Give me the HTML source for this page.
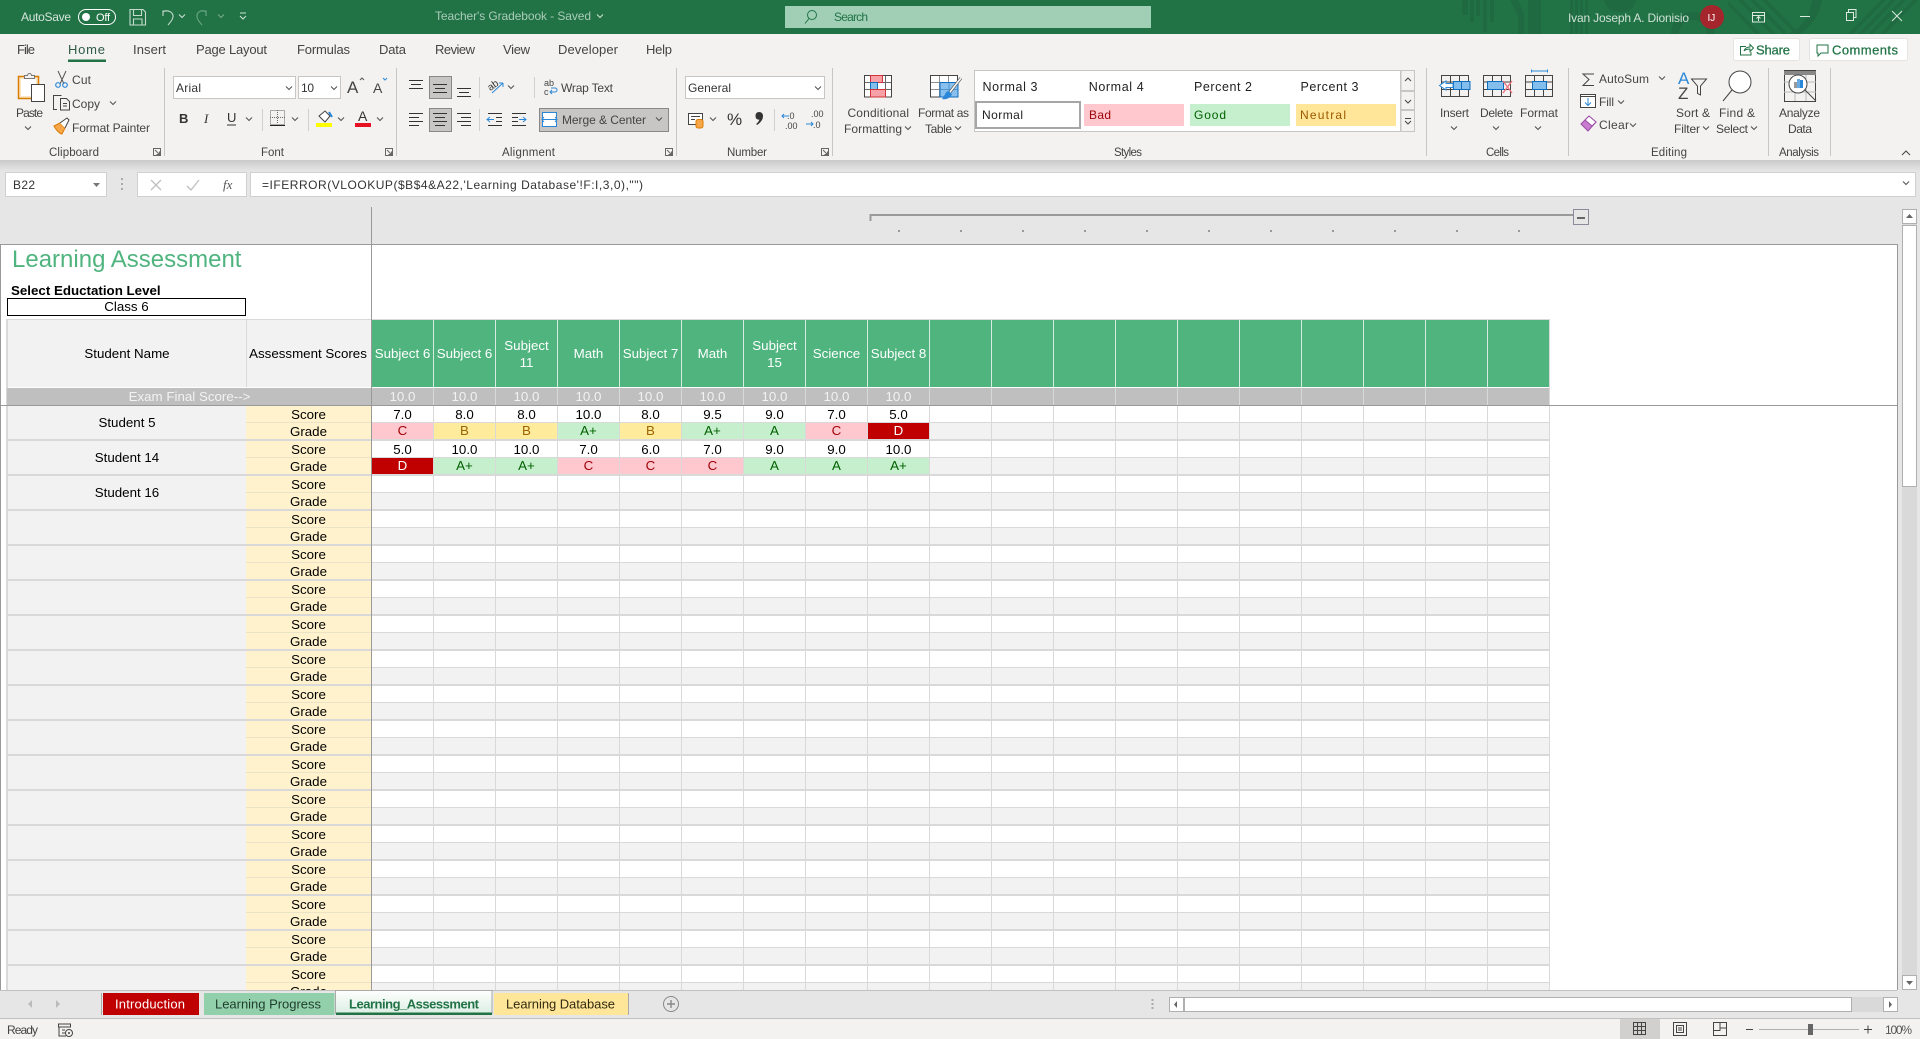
<!DOCTYPE html>
<html><head><meta charset="utf-8"><title>Teacher's Gradebook</title>
<style>
html,body{margin:0;padding:0;width:1920px;height:1039px;overflow:hidden;background:#e6e6e6;font-family:"Liberation Sans",Arial,sans-serif}
svg{position:absolute;left:0;top:0}
svg text{font-family:"Liberation Sans",Arial,sans-serif;font-size:12px;fill:#444}
#s{position:absolute;left:0;top:0;width:1898px;height:990px;overflow:hidden;font-size:13.33px;color:#000}
#s div{position:absolute;box-sizing:border-box;text-align:center}
.l{background:#999}
.c0{left:372px}.c1{left:434px}.c2{left:496px}.c3{left:558px}.c4{left:620px}.c5{left:682px}.c6{left:744px}.c7{left:806px}.c8{left:868px}
#s .h,#s .e,#s .v,#s .g{width:61px}
#s .h{top:320px;height:67px;color:#fff;display:flex;align-items:center;justify-content:center;line-height:17px}
#s .e{top:388px;height:17px;line-height:17px;color:#f2f2f2}
#s .v{top:0;height:16px;line-height:17px}
#s .g{top:17px;height:16px;line-height:16px}
.R{background:#ffc7ce;color:#9c0006}.G{background:#c6efce;color:#006100}.Y{background:#ffeb9c;color:#9c6500}.D{background:#c00000;color:#fff}
#s .n{left:8px;width:238px;height:33px;line-height:33px}
#bc{left:246px;top:406px;width:125px;height:600px;background:#fff2cc}
#bc i{display:block;box-sizing:border-box;font-style:normal;text-align:center}
#bc i.a{border-bottom:1px solid #ebe3c8;height:17px;line-height:17px}
#bc i.b{border-bottom:2px solid #d9d9d9;height:18px;line-height:18px}
</style></head>
<body>
<svg width="1920" height="1039" viewBox="0 0 1920 1039">
<defs>
<path id="c" d="M-3-1.5L0 1.5 3-1.5" fill="none" stroke="#555" stroke-width="1.1"/>
<path id="w" d="M-3-1.5L0 1.5 3-1.5" fill="none" stroke="#cfe1d6" stroke-width="1"/>
<linearGradient id="sh" x1="0" y1="0" x2="0" y2="1"><stop offset="0" stop-color="#c9c9c9"/><stop offset="1" stop-color="#e6e6e6"/></linearGradient>
<linearGradient id="at" x1="0" y1="0" x2="0" y2="1"><stop offset="0" stop-color="#fff"/><stop offset="1" stop-color="#dcefe4"/></linearGradient>
</defs>
<!-- title bar -->
<rect width="1920" height="34" fill="#217346"/>
<g fill="#1f6a41">
<rect x="1462" y="0" width="6" height="15"/><rect x="1470" y="0" width="4" height="22"/><rect x="1476" y="0" width="4" height="16"/><rect x="1483" y="0" width="4" height="32"/><rect x="1490" y="0" width="4" height="22"/>
<path d="M1510 0h8l6 14v20h-6V16z"/><rect x="1528" y="0" width="13" height="34"/>
<rect x="1570" y="0" width="3" height="34"/><rect x="1575" y="0" width="3" height="34"/><rect x="1580" y="0" width="3" height="34"/><rect x="1585" y="0" width="3" height="34"/>
<path d="M1604 0h32c-2 10-8 12-16 12s-14-3-16-12z"/>
<path d="M1718 34a22 22 0 0 0-44 0h8a14 14 0 0 1 28 0z" transform="translate(-3 0)"/>
<path d="M1728 5l28 29h5l-33-33zM1738 0l33 34h5l-33-34zM1750 0l33 34h5l-33-34zM1762 0l33 34h5l-33-34z"/>
<path d="M1822 0c-2 14-10 26-22 34h-12c14-6 22-20 24-34z"/>
<path d="M1848 34l33-34h5l-33 34zM1858 34l33-34h5l-33 34zM1868 34l33-34h5l-33 34zM1880 34l33-34h5l-33 34z"/>
</g>
<text x="21" y="21" textLength="50" style="fill:#d5e5db">AutoSave</text>
<rect x="78.500" y="9.500" width="37" height="15" rx="7.500" fill="none" stroke="#fff"/>
<circle cx="86" cy="17" r="4" fill="#fff"/>
<text x="96" y="21" textLength="14" style="fill:#fff;font-size:11px">Off</text>
<g fill="none" stroke="#c6dace" stroke-width="1.1">
<path d="M130 9.500h13l2.500 2.500v13h-15.500zM133.500 9.500v6h8v-6M133.500 25v-6h8.500v6"/>
<path d="M168 11h-5v5M163.500 11.500c5-2 10 1 9.500 5.500-.4 3-2.500 5-5 8"/>
<use href="#w" x="182" y="16"/>
</g>
<g fill="none" stroke="#6ea888" stroke-width="1.1">
<path d="M201 11h5v5M205.500 11.500c-5-2-9 1-8.500 5.500.4 3 2.500 5 5 8"/>
<use href="#w" x="221" y="16" opacity=".5"/>
</g>
<path d="M240 13h6M240 16l3 3 3-3" fill="none" stroke="#cfe1d6"/>
<text x="435" y="20" textLength="156" style="fill:#a9cbb8">Teacher's Gradebook  -  Saved</text>
<use href="#w" x="600" y="16"/>
<rect x="785" y="6" width="366" height="22" fill="#a0cfb5"/>
<circle cx="812" cy="15" r="4.500" fill="none" stroke="#217346"/><path d="M809 18.500l-4 5" stroke="#217346" fill="none"/>
<text x="834" y="21" textLength="34" style="fill:#217346">Search</text>
<text x="1568" y="22" textLength="121" style="fill:#cfe1d6">Ivan Joseph A. Dionisio</text>
<circle cx="1712" cy="17" r="12" fill="#a4262c"/>
<text x="1707.500" y="21" style="fill:#fff;font-size:10px">IJ</text>
<g fill="none" stroke="#dbe9e0">
<path d="M1752.500 12.500h12v9.500h-12zM1752.500 15.500h12M1758.500 21v-4M1756.500 18.500l2-2 2 2"/>
<path d="M1800 16.500h10"/>
<path d="M1846.500 12.500h7v8h-7zM1848.500 12v-2.500h7.500v8h-2.500"/>
<path d="M1892 11l10 10M1902 11l-10 10"/>
</g>
<!-- ribbon -->
<rect y="34" width="1920" height="126" fill="#f3f2f1"/>
<rect y="160" width="1920" height="11" fill="url(#sh)"/>
<text x="17" y="54" textLength="18" style="font-size:13px">File</text>
<text x="68" y="54" textLength="37" style="font-size:13px;fill:#2f5a43">Home</text>
<text x="133" y="54" textLength="33" style="font-size:13px">Insert</text>
<text x="196" y="54" textLength="71" style="font-size:13px">Page Layout</text>
<text x="297" y="54" textLength="53" style="font-size:13px">Formulas</text>
<text x="379" y="54" textLength="27" style="font-size:13px">Data</text>
<text x="435" y="54" textLength="40" style="font-size:13px">Review</text>
<text x="503" y="54" textLength="27" style="font-size:13px">View</text>
<text x="558" y="54" textLength="60" style="font-size:13px">Developer</text>
<text x="646" y="54" textLength="26" style="font-size:13px">Help</text>
<rect x="68" y="59.500" width="38" height="2.500" fill="#217346"/>
<!-- share/comments -->
<rect x="1733.500" y="38.500" width="66" height="22" rx="2" fill="#fff" stroke="#e6e4e2"/>
<rect x="1809.500" y="38.500" width="98" height="22" rx="2" fill="#fff" stroke="#e6e4e2"/>
<path d="M1746 46.500h-5.500v8.500h10.500v-3M1744 51c.8-2.500 3-4 6-4v-2.500l3.500 3.500-3.500 3.500v-2.500c-2.500 0-4.500.5-6 2" fill="none" stroke="#217346"/>
<text x="1756" y="54.500" textLength="34" style="fill:#217346;font-size:13px;stroke:#217346;stroke-width:.25">Share</text>
<path d="M1817 45h11v8h-7l-3 3v-3h-1z" fill="none" stroke="#217346"/>
<text x="1832" y="54.500" textLength="66" style="fill:#217346;font-size:13px;stroke:#217346;stroke-width:.25">Comments</text>
<!-- separators -->
<g stroke="#c8c6c4">
<path d="M164.500 68v88M396.500 68v88M676.500 68v88M832.500 68v88M1426.500 68v88M1568.500 68v88M1768.500 68v88M1830.500 68v88"/>
<path d="M262.500 109v22M308.500 109v22M479.500 77v21M479.500 109v22M534.500 77v21M774.500 109v22" stroke="#d2d0ce"/>
</g>
<!-- group labels -->
<text x="49" y="156" textLength="50" style="font-size:11.500px">Clipboard</text>
<text x="261" y="156" textLength="23" style="font-size:11.500px">Font</text>
<text x="502" y="156" textLength="53" style="font-size:11.500px">Alignment</text>
<text x="727" y="156" textLength="40" style="font-size:11.500px">Number</text>
<text x="1114" y="156" textLength="28" style="font-size:11.500px">Styles</text>
<text x="1486" y="156" textLength="23" style="font-size:11.500px">Cells</text>
<text x="1651" y="156" textLength="36" style="font-size:11.500px">Editing</text>
<text x="1779" y="156" textLength="40" style="font-size:11.500px">Analysis</text>
<g fill="none" stroke="#666"><path d="M153.500 148.500h7v7h-7zM155 150l4 4M159.500 151.500v3h-3M385.500 148.500h7v7h-7zM387 150l4 4M391.500 151.500v3h-3M665.500 148.500h7v7h-7zM667 150l4 4M671.500 151.500v3h-3M821.500 148.500h7v7h-7zM823 150l4 4M827.500 151.500v3h-3"/></g>
<!-- clipboard -->
<rect x="18.500" y="76.500" width="20" height="22" fill="#fce7c4" stroke="#d97c00" stroke-width="1.500"/>
<rect x="21" y="79" width="15" height="17" fill="#fff"/>
<path d="M24.500 78.500v-3h3a2 2 0 0 1 4 0h3v3z" fill="#f3f2f1" stroke="#777"/>
<rect x="31.500" y="84.500" width="13" height="17" fill="#fff" stroke="#444"/>
<text x="16" y="117" textLength="27">Paste</text><use href="#c" x="28" y="128"/>
<path d="M58 71l6 13M66 71l-6 13" fill="none" stroke="#555"/>
<circle cx="58" cy="85" r="2.300" fill="none" stroke="#2b88d8" stroke-width="1.200"/><circle cx="65" cy="85" r="2.300" fill="none" stroke="#2b88d8" stroke-width="1.200"/>
<text x="72" y="84" textLength="19">Cut</text>
<path d="M57 109.500h-3.500v-14h8M60.500 98.500h6l3 3v8.500h-9zM63 103.500h4M63 106h4" fill="none" stroke="#444"/>
<text x="72" y="108" textLength="28">Copy</text><use href="#c" x="113" y="103"/>
<path d="M54 126l6-3 5 5-3 6c-2 0-6-4-8-8z" fill="#f7a64a" stroke="#d97c00"/><path d="M60 123l7-5 2 2-4 8" fill="#fff" stroke="#444"/>
<text x="72" y="132" textLength="78">Format Painter</text>
<!-- font -->
<rect x="173.500" y="76.500" width="122" height="22" fill="#fff" stroke="#c8c6c4"/>
<rect x="298.500" y="76.500" width="42" height="22" fill="#fff" stroke="#c8c6c4"/>
<text x="176" y="92" textLength="25" style="fill:#333">Arial</text><use href="#c" x="289" y="88"/>
<text x="301" y="92" textLength="13" style="fill:#333">10</text><use href="#c" x="334" y="88"/>
<text x="347" y="93" style="font-size:17px">A</text><path d="M360 80l2-2 2 2" fill="none" stroke="#555"/>
<text x="373" y="93" style="font-size:14px">A</text><path d="M383 78l2 2 2-2" fill="none" stroke="#2b88d8"/>
<text x="179" y="123" style="font-size:13px;font-weight:bold;fill:#333">B</text>
<text x="204" y="123" style="font-size:13px;font-style:italic;font-family:'Liberation Serif',serif;fill:#333">I</text>
<text x="227" y="122" style="font-size:13px;fill:#333">U</text><path d="M227 125h9" stroke="#333"/>
<use href="#c" x="249" y="119"/>
<path d="M270.500 110.500h14v14h-14z" fill="none" stroke="#666" stroke-dasharray="1 1"/><path d="M277.500 110v14M270 117.500h15" stroke="#666" stroke-dasharray="1 1"/><path d="M270 125.500h15" stroke="#222"/>
<use href="#c" x="295" y="119"/>
<path d="M319 116l6-5 5 5-5 6z" fill="#fff" stroke="#444"/><path d="M329 112l3 5" stroke="#2b88d8" stroke-width="2"/><rect x="316" y="123" width="16" height="4" fill="#ff0"/>
<use href="#c" x="341" y="119"/>
<text x="358" y="121" style="font-size:14px;fill:#333">A</text><rect x="355" y="123" width="16" height="4" fill="#e81123"/>
<use href="#c" x="380" y="119"/>
<!-- alignment -->
<rect x="429.500" y="76.500" width="22" height="22" fill="#c8c6c4" stroke="#8a8886"/>
<rect x="429.500" y="108.500" width="22" height="23" fill="#c8c6c4" stroke="#8a8886"/>
<g stroke="#333" fill="none">
<path d="M409 80.500h14M411 84.500h10M409 88.500h14"/>
<path d="M433 84.500h14M435 88.500h10M433 92.500h14"/>
<path d="M457 88.500h14M459 92.500h10M457 96.500h14" />
<path d="M409 113.500h14M409 117.500h10M409 121.500h14M409 125.500h10"/>
<path d="M433 113.500h14M435 117.500h10M433 121.500h14M435 125.500h10"/>
<path d="M457 113.500h14M461 117.500h10M457 121.500h14M461 125.500h10"/>
<path d="M488 113.500h14M488 125.500h14M496 117.500h6M496 121.500h6M512 113.500h14M512 125.500h14M512 117.500h6M512 121.500h6"/>
</g>
<path d="M487 119.500h7M490 117l-3 2.500 3 2.500M519 119.500h7M523 117l3 2.500-3 2.500" fill="none" stroke="#2b88d8"/>
<text x="488" y="88" style="font-size:10px;fill:#333" transform="rotate(-35 494 86)">ab</text>
<path d="M492 93l11-10M503 83h-4M503 83v4" fill="none" stroke="#2b88d8"/><use href="#c" x="511" y="87"/>
<text x="544" y="86" style="font-size:9px">ab</text><text x="544" y="95" style="font-size:9px">c</text>
<path d="M551 92h4a2 2 0 0 0 0-4h-4M552 90l-2 2 2 2" fill="none" stroke="#2b88d8"/>
<text x="561" y="92" textLength="52">Wrap Text</text>
<rect x="539.500" y="108.500" width="129" height="23" fill="#c8c6c4" stroke="#8a8886"/>
<rect x="542.500" y="112.500" width="14" height="14" fill="#fff" stroke="#2b88d8"/><path d="M542 119.500h15M544 117l-2 2.500 2 2.500M555 117l2 2.500-2 2.500" fill="none" stroke="#2b88d8"/>
<text x="562" y="124" textLength="84">Merge &amp; Center</text><use href="#c" x="659" y="119"/>
<!-- number -->
<rect x="685.500" y="76.500" width="139" height="22" fill="#fff" stroke="#c8c6c4"/>
<text x="688" y="92" textLength="43" style="fill:#333">General</text><use href="#c" x="818" y="88"/>
<rect x="688.500" y="113.500" width="14" height="11" fill="#fff" stroke="#444"/><path d="M691 116.500h9M691 119.500h4" stroke="#444"/><rect x="696" y="119.500" width="7" height="8.500" rx="2" fill="#f7a64a" stroke="#d97c00"/>
<use href="#c" x="713" y="119"/>
<text x="727" y="125" textLength="15" style="font-size:17px;fill:#333">%</text>
<path d="M759 112c2.500 0 4 1.500 4 4 0 4-3 7-6 9l-.8-1c1.500-1.300 2.800-2.800 3.200-4.500-.3.100-.6.100-.9.100-1.800 0-3-1.300-3-3.800 0-2.300 1.500-3.800 3.500-3.800z" fill="#333"/>
<text x="787" y="119" style="font-size:9px">.0</text><text x="785" y="129" style="font-size:9px">.00</text><path d="M782 116h7M784 114l-2 2 2 2" fill="none" stroke="#2b88d8"/>
<text x="811" y="117" style="font-size:9px">.00</text><text x="813" y="128" style="font-size:9px">.0</text><path d="M806 124h7M811 122l2 2-2 2" fill="none" stroke="#2b88d8"/>
<!-- conditional -->
<rect x="864.500" y="75.500" width="27" height="21.500" fill="#fff" stroke="#444"/>
<path d="M864 82.500h28M864 89.500h28M870.500 75v22M877.500 75v22M885.500 75v22" stroke="#444" fill="none" opacity=".8"/>
<rect x="870.500" y="75.500" width="12" height="7" fill="#f8a0a8" stroke="#d13438"/><rect x="870.500" y="82.500" width="7" height="7" fill="#83beec" stroke="#106ebe"/><rect x="870.500" y="89.500" width="15" height="7.500" fill="#f8a0a8" stroke="#d13438"/>
<text x="847.500" y="117" textLength="61.500">Conditional</text>
<text x="844" y="133" textLength="58">Formatting</text><use href="#c" x="908" y="128"/>
<rect x="930.500" y="75.500" width="27" height="21.500" fill="#fff" stroke="#444"/>
<path d="M930 82.500h28M930 89.500h28M939.500 75v22M948.500 75v22" stroke="#444" fill="none" opacity=".6"/>
<rect x="940" y="82.500" width="18" height="14.500" fill="#8ac0ee" stroke="#106ebe"/><path d="M949 83v14M940 89.500h18" stroke="#106ebe" opacity=".5"/>
<path d="M961 78l-11 14" stroke="#555" stroke-width="3"/><path d="M961 78l-11 14" stroke="#fff" stroke-width="1.500"/><path d="M948 91c-3 1-3 5-6 8 4 1 9-1 10-5z" fill="#2b88d8"/>
<text x="918" y="117" textLength="51">Format as</text>
<text x="925" y="133" textLength="27">Table</text><use href="#c" x="958" y="128"/>
<!-- gallery -->
<rect x="974.500" y="70.500" width="426" height="61" fill="#fff" stroke="#c8c6c4"/>
<text x="982.500" y="91" textLength="55" style="fill:#222;font-size:12.500px">Normal 3</text>
<text x="1088.700" y="91" textLength="55" style="fill:#222;font-size:12.500px">Normal 4</text>
<text x="1194" y="91" textLength="58" style="fill:#222;font-size:12.500px">Percent 2</text>
<text x="1300.500" y="91" textLength="58" style="fill:#222;font-size:12.500px">Percent 3</text>
<rect x="976" y="102" width="104" height="26" fill="#fff" stroke="#a6a6a6" stroke-width="2"/>
<text x="982" y="119" textLength="41" style="fill:#222">Normal</text>
<rect x="1084" y="104" width="100" height="22" fill="#ffc7ce"/><text x="1089" y="119" textLength="22" style="fill:#9c0006">Bad</text>
<rect x="1190" y="104" width="100" height="22" fill="#c6efce"/><text x="1194" y="119" textLength="32" style="fill:#006100">Good</text>
<rect x="1296" y="104" width="100" height="22" fill="#ffe699"/><text x="1300" y="119" textLength="46" style="fill:#9c5700">Neutral</text>
<g fill="#f3f2f1" stroke="#c8c6c4"><rect x="1401" y="70.500" width="13.500" height="20"/><rect x="1401" y="91.500" width="13.500" height="18"/><rect x="1401" y="110.500" width="13.500" height="21"/></g>
<path d="M1405 81l3-3 3 3M1405 100l3 3 3-3M1405 118.500h6M1405 121l3 3 3-3" fill="none" stroke="#444"/>
<!-- cells -->
<g fill="none" stroke="#444">
<path d="M1441.500 75.500h27v21h-27zM1441 82h28M1441 89.500h28M1450.500 75v21M1459.500 75v21"/>
<path d="M1483.500 75.500h27v21h-27zM1483 82h28M1483 89.500h28M1492.500 75v21M1501.500 75v21"/>
<path d="M1525.500 75.500h27v21h-27zM1525 82h28M1525 89.500h28M1534.500 75v21M1543.500 75v21"/>
</g>
<rect x="1453.500" y="81.500" width="16.500" height="8" fill="#83beec" stroke="#106ebe"/><path d="M1461.500 81.500v8" stroke="#106ebe"/>
<path d="M1453 83.500h-7v-2.500l-6.500 4.500 6.500 4.500v-2.500h7z" fill="#fff" stroke="#2b88d8"/>
<rect x="1487.500" y="81.500" width="16" height="8" fill="#83beec" stroke="#106ebe"/>
<path d="M1503 81l9 12M1512 81l-9 12" stroke="#f1707b" stroke-width="1.300"/>
<rect x="1532.500" y="81.500" width="14" height="8" fill="#83beec" stroke="#106ebe"/>
<path d="M1531.500 71h16M1531.500 69.500v3M1547.500 69.500v3" stroke="#2b88d8" fill="none"/>
<text x="1440" y="117" textLength="29">Insert</text><use href="#c" x="1454" y="128"/>
<text x="1480" y="117" textLength="33">Delete</text><use href="#c" x="1496" y="128"/>
<text x="1520" y="117" textLength="38">Format</text><use href="#c" x="1538" y="128"/>
<!-- editing -->
<path d="M1594 74h-11l6 5.500-6 6h11" fill="none" stroke="#444"/>
<text x="1599" y="83" textLength="50">AutoSum</text><use href="#c" x="1662" y="78"/>
<rect x="1580.500" y="94.500" width="15" height="13" fill="#fff" stroke="#444"/><path d="M1580 96.500h16" stroke="#444"/><path d="M1588 98v7M1585 102.500l3 3 3-3" fill="none" stroke="#2b88d8"/>
<text x="1599" y="106" textLength="15">Fill</text><use href="#c" x="1621" y="102"/>
<path d="M1581 124l8-8 7 6-8 9z" fill="#c77cd0" stroke="#9a4aa5"/><path d="M1585 120l7 6 4-4-7-6z" fill="#fff" stroke="#9a4aa5"/>
<text x="1599" y="129" textLength="30">Clear</text><use href="#c" x="1633" y="125"/>
<text x="1678" y="84" style="font-size:17px;fill:#2b88d8">A</text><text x="1678" y="99" style="font-size:17px;fill:#444">Z</text>
<path d="M1691.500 79h15l-6 7v9l-3-1.500v-7.500z" fill="#f3f2f1" stroke="#444"/>
<text x="1676" y="117" textLength="34">Sort &amp;</text>
<text x="1674" y="133" textLength="26">Filter</text><use href="#c" x="1706" y="128"/>
<circle cx="1740" cy="82" r="11" fill="#fff" stroke="#444"/><path d="M1732 90l-9 11" stroke="#444"/>
<text x="1719" y="117" textLength="36">Find &amp;</text>
<text x="1716" y="133" textLength="32">Select</text><use href="#c" x="1754" y="128"/>
<!-- analyze -->
<rect x="1784.500" y="70.500" width="31" height="31" fill="#f3f2f1" stroke="#444"/><rect x="1784" y="71" width="32" height="4" fill="#888"/>
<path d="M1784 82h32M1784 92h32M1795 75v26M1806 75v26" stroke="#bbb"/>
<circle cx="1798" cy="84" r="9" fill="#fff" stroke="#444"/><path d="M1805 90l11 11" stroke="#444"/>
<rect x="1794" y="82" width="3" height="6" fill="#999"/><rect x="1797" y="79" width="3" height="9" fill="#2b88d8" opacity=".7"/><rect x="1800" y="80" width="3" height="8" fill="#2b88d8"/>
<text x="1779" y="117" textLength="41">Analyze</text>
<text x="1788" y="133" textLength="24">Data</text>
<path d="M1902 155l4-4 4 4" fill="none" stroke="#444"/>
<!-- formula bar -->
<rect x="5.500" y="172.500" width="101" height="24" fill="#fff" stroke="#d2d0ce"/>
<text x="13" y="189" textLength="22" style="fill:#333">B22</text><path d="M93 183h7l-3.500 4z" fill="#777"/>
<path d="M122 178v2M122 183v2M122 188v2" stroke="#aaa" stroke-width="2"/>
<rect x="137.500" y="172.500" width="109" height="24" fill="#fff" stroke="#d2d0ce"/>
<path d="M151 180l10 10M161 180l-10 10" stroke="#c0c0c0" fill="none" stroke-width="1.300"/>
<path d="M187 186l4 4 8-10" stroke="#c0c0c0" fill="none" stroke-width="1.300"/>
<text x="223" y="189" style="font-family:'Liberation Serif',serif;font-style:italic;font-size:13px;fill:#555">fx</text>
<rect x="250.500" y="172.500" width="1665" height="24" fill="#fff" stroke="#d2d0ce"/>
<text x="262" y="189" textLength="381" style="fill:#333">=IFERROR(VLOOKUP($B$4&amp;A22,'Learning Database'!F:I,3,0),"")</text>
<use href="#c" x="1906" y="183"/>
<!-- outline -->
<path d="M870.500 221v-6h703" fill="none" stroke="#999" stroke-width="2"/>
<rect x="1573.500" y="209.500" width="15" height="15" fill="#e6e6e6" stroke="#8a8a9a"/><rect x="1577" y="217" width="8" height="2" fill="#666"/>
<g fill="#999"><rect x="898" y="230" width="2" height="2"/><rect x="960" y="230" width="2" height="2"/><rect x="1022" y="230" width="2" height="2"/><rect x="1084" y="230" width="2" height="2"/><rect x="1146" y="230" width="2" height="2"/><rect x="1208" y="230" width="2" height="2"/><rect x="1270" y="230" width="2" height="2"/><rect x="1332" y="230" width="2" height="2"/><rect x="1394" y="230" width="2" height="2"/><rect x="1456" y="230" width="2" height="2"/><rect x="1518" y="230" width="2" height="2"/></g>
<!-- v scroll -->
<rect x="1902" y="209" width="15" height="781" fill="#d9d9d9"/>
<rect x="1902.500" y="209.500" width="14" height="14" fill="#fff" stroke="#b0b0b0"/><path d="M1906 218h7l-3.500-4z" fill="#666"/>
<rect x="1902.500" y="225.500" width="14" height="261" fill="#fff" stroke="#b0b0b0"/>
<rect x="1902.500" y="975.500" width="14" height="14" fill="#fff" stroke="#b0b0b0"/><path d="M1906 981h7l-3.500 4z" fill="#666"/>
<!-- tabs bar -->
<rect y="990" width="1920" height="29" fill="#e6e6e6"/>
<path d="M0 990.500h1897M0 1018.500h1920" stroke="#c0c0c0"/>
<path d="M32 1000v8l-4-4zM56 1000v8l4-4z" fill="#bbb"/>
<path d="M101.500 993v22M628.500 993v22" stroke="#aaa"/>
<rect x="103" y="993" width="96" height="22" fill="#c00000"/>
<text x="115" y="1008.500" textLength="70" style="fill:#fff;font-size:13px">Introduction</text>
<rect x="204" y="993" width="130.500" height="22" fill="#92d0ac"/>
<text x="215" y="1008.500" textLength="106" style="fill:#1f3d2c;font-size:13px">Learning Progress</text>
<rect x="336" y="990" width="155.500" height="23" fill="url(#at)"/>
<path d="M335.500 1014v-23.500h156.500V1014" fill="none" stroke="#aaa"/>
<rect x="336" y="1012.500" width="156" height="2.500" fill="#217346"/>
<text x="349" y="1008.500" textLength="130" style="fill:#217346;font-size:13px;font-weight:bold">Learning_Assessment</text>
<rect x="494" y="993" width="134" height="22" fill="#ffe699"/>
<text x="506" y="1008.500" textLength="109" style="fill:#332b10;font-size:13px">Learning Database</text>
<circle cx="671" cy="1004" r="7.500" fill="none" stroke="#888"/><path d="M667 1004h8M671 1000v8" stroke="#888" stroke-width="1.400"/>
<path d="M1152.500 999v2M1152.500 1003v2M1152.500 1007v2" stroke="#aaa" stroke-width="2"/>
<rect x="1169.500" y="997.500" width="14" height="14" fill="#fff" stroke="#b0b0b0"/><path d="M1177 1001v7l-3-3.500z" fill="#666"/>
<rect x="1184.500" y="997.500" width="667" height="14" fill="#fff" stroke="#b0b0b0"/>
<rect x="1852" y="997" width="31" height="15" fill="#d9d9d9"/>
<rect x="1883.500" y="997.500" width="14" height="14" fill="#fff" stroke="#b0b0b0"/><path d="M1889 1001v7l3-3.500z" fill="#666"/>
<!-- status bar -->
<rect y="1019" width="1920" height="20" fill="#f3f2f1"/>
<text x="7" y="1034" textLength="31" style="fill:#444">Ready</text>
<path d="M58.500 1024h12v3h-12zM59 1027v9h7M62 1030h3M62 1033h3" fill="none" stroke="#444"/><circle cx="69" cy="1033" r="3.500" fill="none" stroke="#444"/><circle cx="69" cy="1033" r="1" fill="#444"/>
<rect x="1620" y="1019" width="40" height="20" fill="#d2d0ce"/>
<path d="M1633.500 1022.500h12v12h-12zM1633 1026.500h13M1633 1030.500h13M1637.500 1022v13M1641.500 1022v13" fill="none" stroke="#444"/>
<path d="M1673.500 1022.500h13v13h-13zM1676.500 1025.500h7v7h-7zM1678 1028h4M1678 1030h4" fill="none" stroke="#444"/>
<path d="M1713.500 1022.500h13v13h-13zM1713 1030.500h7v-8M1720.500 1028h6" fill="none" stroke="#444"/>
<path d="M1746 1029.500h7" stroke="#444"/><path d="M1759 1029.500h100" stroke="#b0b0b0"/>
<rect x="1808" y="1024" width="5" height="11" fill="#666"/>
<path d="M1864 1029.500h8M1868 1025.500v8" stroke="#444"/>
<text x="1885" y="1034" textLength="27" style="fill:#555">100%</text>
</svg>
<div id="s">
<div style="left:0;top:244px;width:1898px;height:746px;background:#fff"></div>
<!-- title -->
<div style="left:12px;top:245px;width:240px;height:30px;line-height:29px;font-size:24px;color:#50b47f;text-align:left">Learning Assessment</div>
<div style="left:11px;top:283px;width:200px;height:16px;line-height:16px;font-weight:bold;text-align:left">Select Eductation Level</div>
<div style="left:7px;top:298px;width:239px;height:18px;line-height:16px;border:1px solid #000">Class 6</div>
<!-- header -->
<div style="left:6px;top:319px;width:1544px;height:1px;background:#d9d9d9"></div>
<div style="left:6px;top:319px;width:2px;height:671px;background:#d9d9d9"></div>
<div style="left:8px;top:320px;width:238px;height:67px;background:#f2f2f2;line-height:67px">Student Name</div>
<div style="left:246px;top:320px;width:125px;height:67px;background:#f2f2f2;border-left:1px solid #d9d9d9;padding-right:2px;line-height:67px">Assessment Scores</div>
<div style="left:372px;top:320px;width:1178px;height:67px;background:repeating-linear-gradient(90deg,#50b47f 0 61px,#d8ebe0 61px 62px)"></div>
<div style="left:1549px;top:319px;width:1px;height:671px;background:#d9d9d9"></div>
<div class="h c0">Subject 6</div><div class="h c1">Subject 6</div><div class="h c2">Subject<br>11</div><div class="h c3">Math</div><div class="h c4">Subject 7</div><div class="h c5">Math</div><div class="h c6">Subject<br>15</div><div class="h c7">Science</div><div class="h c8">Subject 8</div>
<!-- exam row -->
<div style="left:7px;top:388px;width:1543px;height:17px;background:#bfbfbf"></div>
<div style="left:372px;top:388px;width:1178px;height:17px;background:repeating-linear-gradient(90deg,#bfbfbf 0 61px,#d9d9d9 61px 62px)"></div>
<div style="left:8px;top:388px;width:363px;height:17px;line-height:17px;color:#f2f2f2">Exam Final Score--&gt;</div>
<div class="e c0">10.0</div><div class="e c1">10.0</div><div class="e c2">10.0</div><div class="e c3">10.0</div><div class="e c4">10.0</div><div class="e c5">10.0</div><div class="e c6">10.0</div><div class="e c7">10.0</div><div class="e c8">10.0</div>
<!-- col A -->
<div style="left:8px;top:406px;width:238px;height:600px;background:repeating-linear-gradient(180deg,#f2f2f2 0 33px,#d9d9d9 33px 35px)"></div>
<!-- grid -->
<div style="left:371px;top:406px;width:1179px;height:600px;background:repeating-linear-gradient(90deg,#d9d9d9 0 1px,transparent 1px 62px),repeating-linear-gradient(180deg,#fff 0 16px,#d9d9d9 16px 17px,#f2f2f2 17px 33px,#d9d9d9 33px 35px)"></div>
<!-- col B -->
<div id="bc"><i class="a">Score</i><i class="b">Grade</i><i class="a">Score</i><i class="b">Grade</i><i class="a">Score</i><i class="b">Grade</i><i class="a">Score</i><i class="b">Grade</i><i class="a">Score</i><i class="b">Grade</i><i class="a">Score</i><i class="b">Grade</i><i class="a">Score</i><i class="b">Grade</i><i class="a">Score</i><i class="b">Grade</i><i class="a">Score</i><i class="b">Grade</i><i class="a">Score</i><i class="b">Grade</i><i class="a">Score</i><i class="b">Grade</i><i class="a">Score</i><i class="b">Grade</i><i class="a">Score</i><i class="b">Grade</i><i class="a">Score</i><i class="b">Grade</i><i class="a">Score</i><i class="b">Grade</i><i class="a">Score</i><i class="b">Grade</i><i class="a">Score</i><i class="b">Grade</i></div>
<!-- data -->
<div class="n" style="top:406px">Student 5</div>
<div class="n" style="top:441px">Student 14</div>
<div class="n" style="top:476px">Student 16</div>
<div style="left:0;top:406px;width:1898px;height:33px">
<div class="v c0">7.0</div><div class="v c1">8.0</div><div class="v c2">8.0</div><div class="v c3">10.0</div><div class="v c4">8.0</div><div class="v c5">9.5</div><div class="v c6">9.0</div><div class="v c7">7.0</div><div class="v c8">5.0</div>
<div class="g c0 R">C</div><div class="g c1 Y">B</div><div class="g c2 Y">B</div><div class="g c3 G">A+</div><div class="g c4 Y">B</div><div class="g c5 G">A+</div><div class="g c6 G">A</div><div class="g c7 R">C</div><div class="g c8 D">D</div>
</div>
<div style="left:0;top:441px;width:1898px;height:33px">
<div class="v c0">5.0</div><div class="v c1">10.0</div><div class="v c2">10.0</div><div class="v c3">7.0</div><div class="v c4">6.0</div><div class="v c5">7.0</div><div class="v c6">9.0</div><div class="v c7">9.0</div><div class="v c8">10.0</div>
<div class="g c0 D">D</div><div class="g c1 G">A+</div><div class="g c2 G">A+</div><div class="g c3 R">C</div><div class="g c4 R">C</div><div class="g c5 R">C</div><div class="g c6 G">A</div><div class="g c7 G">A</div><div class="g c8 G">A+</div>
</div>
<!-- frame lines -->
<div class="l" style="left:0;top:244px;width:1898px;height:1px"></div>
<div class="l" style="left:0;top:244px;width:1px;height:746px"></div>
<div class="l" style="left:1897px;top:244px;width:1px;height:746px"></div>
<div class="l" style="left:371px;top:207px;width:1px;height:783px"></div>
<div class="l" style="left:0;top:405px;width:1898px;height:1px"></div>
</div>
</body></html>
